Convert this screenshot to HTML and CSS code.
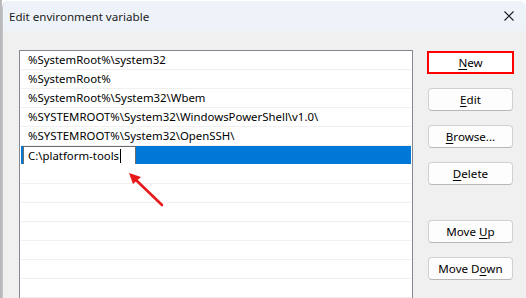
FILE: index.html
```html
<!DOCTYPE html>
<html>
<head>
<meta charset="utf-8">
<link rel="stylesheet" href="styles.css">
</head>
<body>
<div class="screen">
  <div class="behind"></div>
  <div class="window">
    <div class="titlebar">
      <span class="title">Edit environment variable</span>
      <svg class="close" width="10" height="10" viewBox="0 0 10 10"><path d="M0.5 0.5 L9.5 9.5 M9.5 0.5 L0.5 9.5" stroke="#1a1a1a" stroke-width="1.1" fill="none"/></svg>
    </div>
    <div class="content">
      <div class="list">
        <div class="row">%SystemRoot%\system32</div>
        <div class="row">%SystemRoot%</div>
        <div class="row">%SystemRoot%\System32\Wbem</div>
        <div class="row">%SYSTEMROOT%\System32\WindowsPowerShell\v1.0\</div>
        <div class="row">%SYSTEMROOT%\System32\OpenSSH\</div>
        <div class="row selected"><span class="editbox">C:\platform-tools<span class="caret"></span></span></div>
        <div class="row"></div>
        <div class="row"></div>
        <div class="row"></div>
        <div class="row"></div>
        <div class="row"></div>
        <div class="row"></div>
        <div class="row"></div>
      </div>
      <div class="buttons">
        <button class="btn marked"><u>N</u>ew</button>
        <button class="btn"><u>E</u>dit</button>
        <button class="btn"><u>B</u>rowse...</button>
        <button class="btn"><u>D</u>elete</button>
        <button class="btn gap">Move <u>U</u>p</button>
        <button class="btn">Move D<u>o</u>wn</button>
      </div>
    </div>
  </div>
  <svg class="arrow" width="50" height="45" viewBox="0 0 50 45">
    <line x1="40" y1="38" x2="14" y2="13" stroke="#e8191b" stroke-width="2.6" stroke-linecap="round"/>
    <polygon points="7,6 19,10 11,17" fill="#e8191b"/>
  </svg>
</div>
</body>
</html>
```
FILE: styles.css
```css
html, body {
  margin: 0;
  padding: 0;
  background: #ffffff;
  overflow: hidden;
}
.screen {
  position: relative;
  display: flex;
  width: 526px;
  height: 298px;
  font-family: "Noto Sans", "Open Sans", sans-serif;
  font-size: 11.4px;
  color: #000;
}
.behind {
  width: 2px;
  background: #b9b9bd;
}
.window {
  flex: 1;
  display: flex;
  flex-direction: column;
  background: #f0f0f0;
  border-top-left-radius: 7px;
  border-top-right-radius: 7px;
  border-left: 1px solid #c4c4c4;
  overflow: hidden;
  margin-top: 1px;
}
.titlebar {
  height: 30px;
  background: #eef3f9;
  display: flex;
  align-items: center;
  justify-content: space-between;
  padding: 0 12px 0 6px;
}
.title {
  font-size: 11.6px;
  color: #1b1b1b;
  margin-top: 1px;
}
.close {
  display: block;
  margin-top: 0px;
}
.content {
  flex: 1;
  display: flex;
  padding: 19px 0 0 16px;
}
.list {
  width: 390px;
  border: 1px solid #828790;
  border-bottom: none;
  background: #fff;
  padding: 0 1px;
}
.row {
  height: 19px;
  box-sizing: border-box;
  border-bottom: 1px solid #f0f0f0;
  padding-left: 7px;
  line-height: 18px;
  white-space: nowrap;
  overflow: hidden;
}
.row.selected {
  background: #0078d7;
  padding-left: 2px;
  border-bottom-color: #fff;
}
.editbox {
  display: inline-block;
  box-sizing: border-box;
  width: 113px;
  height: 19px;
  border: 1px solid #6b6b6b;
  background: #fff;
  padding-left: 4px;
  line-height: 17px;
  vertical-align: top;
}
.caret {
  display: inline-block;
  width: 1px;
  height: 14px;
  background: #000;
  vertical-align: -3px;
  margin-left: 1px;
}
.buttons {
  display: flex;
  flex-direction: column;
  gap: 14px;
  margin-left: 15px;
  padding-top: 1px;
}
.btn {
  width: 85px;
  height: 23px;
  box-sizing: border-box;
  font-family: "Noto Sans", "Open Sans", sans-serif;
  font-size: 11.6px;
  color: #000;
  background: #fdfdfd;
  border: 1px solid #d0d0d0;
  border-bottom-color: #b8b8b8;
  border-radius: 4px;
  padding: 0;
  line-height: 20px;
}
.btn u {
  text-decoration-thickness: 1px;
  text-underline-offset: 2px;
}
.btn.marked {
  width: 87px;
  margin-left: -1px;
  border: 2px solid #ff0000;
  border-radius: 0;
  background: #ffffff;
}
.btn.gap {
  margin-top: 21px;
}
.arrow {
  position: absolute;
  left: 122px;
  top: 167px;
}
```
